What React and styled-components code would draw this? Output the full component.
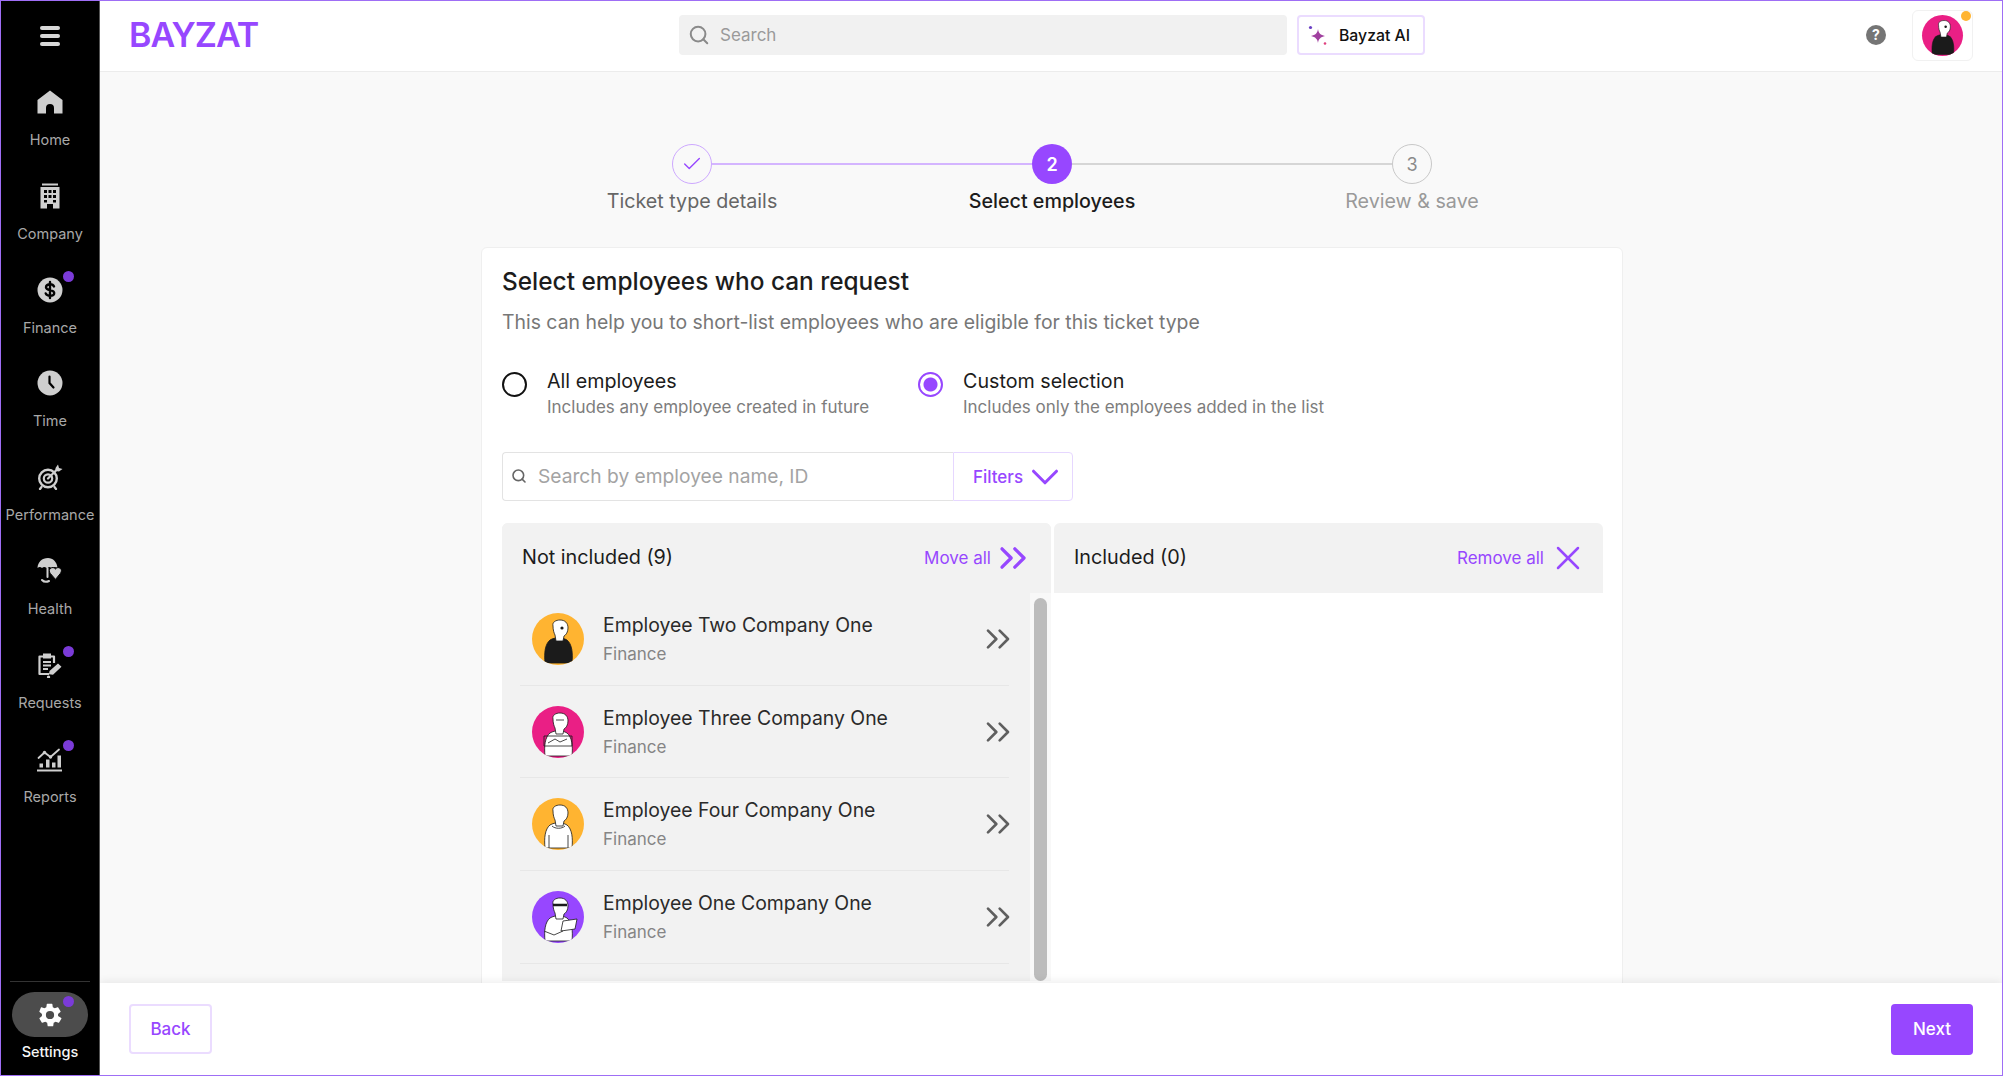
import React from 'react';
import styled, { createGlobalStyle } from 'styled-components';
import { Search, ChevronsRight, ChevronDown, X, Check } from 'lucide-react';

const GlobalStyle = createGlobalStyle`
  html, body {
    margin: 0;
    padding: 0;
    background: #fff;
    font-family: 'Inter', 'Liberation Sans', sans-serif;
    color: #1c1c1c;
  }
  * { box-sizing: border-box; }
`;

const NAV = [
  { label: 'Home', icon: 'home' },
  { label: 'Company', icon: 'company' },
  { label: 'Finance', icon: 'finance', dot: true },
  { label: 'Time', icon: 'time' },
  { label: 'Performance', icon: 'performance' },
  { label: 'Health', icon: 'health' },
  { label: 'Requests', icon: 'requests', dot: true },
  { label: 'Reports', icon: 'reports', dot: true },
];

const EMPLOYEES = [
  { name: 'Employee Two Company One', bg: '#ffb431', look: 'sweater' },
  { name: 'Employee Three Company One', bg: '#ea1f85', look: 'box' },
  { name: 'Employee Four Company One', bg: '#ffb431', look: 'tee' },
  { name: 'Employee One Company One', bg: '#9747ff', look: 'laptop' },
];

const NavIcon = ({ type }) => {
  const fill = '#cfcfcf';
  switch (type) {
    case 'home':
      return (
        <svg width="26" height="26" viewBox="0 0 26 26">
          <path fill={fill} d="M13 1.5 25.5 11v13.5H17V19a4 4 0 0 0-8 0v5.5H.5V11z" />
        </svg>
      );
    case 'company':
      return (
        <svg width="26" height="26" viewBox="0 0 26 26">
          <path fill={fill} d="M5 .5h16v2H5zM3.5 4h19v21.5H16V21h-6v4.5H3.5z" />
          <path fill="#000" d="M7 7h3v3H7zM11.5 7h3v3h-3zM16 7h3v3h-3zM7 12h3v3H7zM11.5 12h3v3h-3zM16 12h3v3h-3zM7 17h3v2.500H7zM16 17h3v2.500h-3z" />
        </svg>
      );
    case 'finance':
      return (
        <svg width="26" height="26" viewBox="0 0 26 26">
          <circle cx="13" cy="13" r="12.5" fill={fill} />
          <path fill="none" stroke="#000" strokeWidth="2.400" strokeLinecap="round" d="M17 9.500c-.6-1.500-2-2.200-4-2.200-2.300 0-4 1-4 2.900 0 4 8.200 1.800 8.200 5.700 0 1.800-1.800 2.900-4.200 2.900-2.200 0-3.700-.9-4.300-2.400M13 5v16" />
        </svg>
      );
    case 'time':
      return (
        <svg width="26" height="26" viewBox="0 0 26 26">
          <circle cx="13" cy="13" r="12.5" fill={fill} />
          <path fill="none" stroke="#000" strokeWidth="2.200" strokeLinecap="round" d="M12.500 6.500V13l4 4.500" />
        </svg>
      );
    case 'performance':
      return (
        <svg width="26" height="26" viewBox="0 0 26 26" fill="none" stroke={fill}>
          <circle cx="11" cy="14.500" r="8.800" strokeWidth="2.400" />
          <circle cx="11" cy="14.500" r="4.200" strokeWidth="2.200" />
          <path strokeWidth="2.200" strokeLinecap="round" d="M11 14.500 20 5.500M4.500 23 3 25M17.500 23 19 25" />
          <path fill={fill} stroke="none" d="M18.500 4 21 .5l1 3.500 3.500 1-3.500 2.500-3.500-.5z" />
        </svg>
      );
    case 'health':
      return (
        <svg width="26" height="26" viewBox="0 0 26 26">
          <path fill={fill} d="M11 0C5 0 .8 4 .5 10c1.500-1.200 3-1.200 4.500 0 1.500-1.200 3-1.200 4.500 0 1.800-1.300 3.400-1.300 5 0 1.500-1.200 4-1.300 6-.3C20 4 16 0 11 0z" />
          <path fill={fill} stroke="#000" strokeWidth="1" d="M18.500 11c1.500-1.700 3.200-1.800 4.600-.8 1.700 1.200 1.700 3.500.3 5.200l-4.900 6-5.200-6c-1.400-1.700-1.300-4 .4-5.200 1.500-1 3.300-.9 4.800.8z" />
          <path fill="none" stroke={fill} strokeWidth="2" strokeLinecap="round" d="M10.500 10v9M5 22c2 2.200 5 2 7 1" />
        </svg>
      );
    case 'requests':
      return (
        <svg width="26" height="26" viewBox="0 0 26 26" fill="none" stroke={fill}>
          <path strokeWidth="2.200" strokeLinejoin="round" d="M12 22H2.500V4.500H17V11" />
          <path fill={fill} stroke="none" d="M6 1.500h8v5H6z" />
          <path strokeWidth="2" d="M6 10h8M6 13.500h8M6 17h5" />
          <path fill={fill} stroke="none" d="M21 11.500l3.500 3.200-8.500 8-4-.5.500-3.200zM11.500 23.500a1.600 1.600 0 1 0 .1 0z" />
        </svg>
      );
    case 'reports':
      return (
        <svg width="26" height="26" viewBox="0 0 26 26" fill={fill}>
          <path d="M0 23.500h25V25.500H0z" />
          <path d="M2.500 17.500h3.500v4H2.500zM9 13.500h3.500v8H9zM15 16.500h3.500v5H15zM20.500 9.500H24v12h-3.500z" />
          <path fill="none" stroke={fill} strokeWidth="1.800" strokeLinecap="round" d="M1.500 12 7.500 6.500l6 4.500L22 3.500" />
          <circle cx="7.500" cy="6.500" r="1.700" />
          <circle cx="13.500" cy="11" r="1.700" />
        </svg>
      );
    default:
      return null;
  }
};

const Gear = () => (
  <svg width="26" height="26" viewBox="0 0 24 24">
    <path
      fill="#fff"
      fillRule="evenodd"
      d="M19.400 13a7.600 7.600 0 0 0 0-2l2.200-1.700a.6.600 0 0 0 .1-.7l-2.100-3.600a.5.5 0 0 0-.6-.2l-2.600 1a7.800 7.800 0 0 0-1.800-1l-.4-2.700a.5.5 0 0 0-.5-.5H9.500a.5.500 0 0 0-.5.500l-.4 2.700c-.6.300-1.200.6-1.800 1l-2.600-1a.5.500 0 0 0-.6.200L2.300 8.600a.5.500 0 0 0 .1.700L4.600 11a7.600 7.600 0 0 0 0 2l-2.200 1.700a.6.600 0 0 0-.1.700l2.100 3.600c.1.200.4.300.6.200l2.600-1c.6.400 1.200.8 1.800 1l.4 2.700c0 .3.200.5.500.5h4.200c.3 0 .5-.2.500-.5l.4-2.700c.6-.2 1.200-.6 1.800-1l2.600 1c.2.100.5 0 .6-.2l2.100-3.600a.6.600 0 0 0-.1-.7zM12 15.800a3.800 3.800 0 1 1 0-7.600 3.800 3.800 0 0 1 0 7.600z"
    />
  </svg>
);

const Person = ({ look }) => {
  const ink = '#1b1b1b';
  return (
    <svg width="100%" height="100%" viewBox="0 0 52 52">
      <path
        fill={look === 'sweater' ? ink : '#fff'}
        stroke={ink}
        strokeWidth="0.8"
        d="M13 50c-1-10 0-19 5-23 5-3 12-3 17 0 5 4 6 13 5 23z"
      />
      <path fill="#fff" stroke={ink} strokeWidth="0.8" d="M21 13c-1-4 3-6 7-6 5 0 8 3 8 8 0 4-2 7-4 8l-1 5h-7l-1-6c-1-2-2-5-2-9z" />
      {look === 'sweater' && <circle cx="30" cy="15" r="1.600" fill={ink} />}
      {look === 'box' && <path fill="none" stroke={ink} strokeWidth="0.8" d="M24 14h8M12 30h28v10H12zM16 37l7-4 5 3 7-3" />}
      {look === 'tee' && <path fill="none" stroke={ink} strokeWidth="0.8" d="M20 28c3 3 10 3 13 0M17 37v13M36 37v13" />}
      {look === 'laptop' && <path stroke={ink} strokeWidth="2.600" d="M21 14h14" />}
      {look === 'laptop' && <path fill="#fff" stroke={ink} strokeWidth="0.8" d="M31 30l14-2-2 10-14 2zM12 40l10 4 9-4" />}
    </svg>
  );
};

export default function App() {
  return (
    <>
      <GlobalStyle />
      <Frame>
        <Sidebar>
          <Burger>
            <span />
            <span />
            <span />
          </Burger>
          {NAV.map((item) => (
            <NavItem key={item.label}>
              <IconBox>
                <NavIcon type={item.icon} />
                {item.dot && <NavDot />}
              </IconBox>
              <NavLabel>{item.label}</NavLabel>
            </NavItem>
          ))}
          <SettingsBlock>
            <SettingsPill>
              <IconBox>
                <Gear />
                <NavDot />
              </IconBox>
            </SettingsPill>
            <NavLabel $active>Settings</NavLabel>
          </SettingsBlock>
        </Sidebar>

        <Main>
          <Topbar>
            <LogoSlot>
              <Logo>BAYZAT</Logo>
            </LogoSlot>
            <TopSearch>
              <Search size={22} color="#8a8a8a" strokeWidth={2.2} />
              <span>Search</span>
            </TopSearch>
            <AiButton>
              <svg width="22" height="22" viewBox="0 0 22 22">
                <path fill="#a0409f" d="M11 5c.6 4 2.500 6 7 7-4.500 1-6.400 3-7 7-.6-4-2.500-6-7-7 4.500-1 6.400-3 7-7z" />
                <circle cx="3.500" cy="3.500" r="1.600" fill="#6a3fc4" />
                <circle cx="18" cy="19.500" r="1.300" fill="#e0407f" />
              </svg>
              Bayzat AI
            </AiButton>
            <HelpIcon>?</HelpIcon>
            <ProfileCard>
              <ProfileAvatar>
                <Person look="sweater" />
              </ProfileAvatar>
              <ProfileDot />
            </ProfileCard>
          </Topbar>

          <Content>
            <StepTrack>
              <StepCircle $state="done">
                <Check size={22} strokeWidth={1.5} />
              </StepCircle>
              <StepLine $done />
              <StepCircle $state="current">2</StepCircle>
              <StepLine />
              <StepCircle>3</StepCircle>
            </StepTrack>
            <StepLabels>
              <StepLabel $state="done">Ticket type details</StepLabel>
              <StepLabel $state="current">Select employees</StepLabel>
              <StepLabel>Review &amp; save</StepLabel>
            </StepLabels>

            <Card>
              <Title>Select employees who can request</Title>
              <Description>This can help you to short-list employees who are eligible for this ticket type</Description>

              <RadioRow>
                <RadioOption $width="416px">
                  <Radio />
                  <div>
                    <RadioTitle>All employees</RadioTitle>
                    <RadioSub>Includes any employee created in future</RadioSub>
                  </div>
                </RadioOption>
                <RadioOption>
                  <Radio $checked />
                  <div>
                    <RadioTitle>Custom selection</RadioTitle>
                    <RadioSub>Includes only the employees added in the list</RadioSub>
                  </div>
                </RadioOption>
              </RadioRow>

              <SearchRow>
                <SearchField>
                  <Search size={16} color="#666" strokeWidth={2.4} />
                  <span>Search by employee name, ID</span>
                </SearchField>
                <FilterButton>
                  Filters
                  <ChevronDown size={46} strokeWidth={1.6} />
                </FilterButton>
              </SearchRow>

              <Lists>
                <ListColumn $tinted>
                  <ListHeader>
                    <ListTitle>Not included (9)</ListTitle>
                    <ListAction>
                      Move all
                      <ChevronsRight size={44} strokeWidth={1.8} />
                    </ListAction>
                  </ListHeader>
                  <ListBody>
                    <Rows>
                      {EMPLOYEES.map((e) => (
                        <Row key={e.name}>
                          <Avatar $bg={e.bg}>
                            <Person look={e.look} />
                          </Avatar>
                          <RowText>
                            <RowName>{e.name}</RowName>
                            <RowSub>Finance</RowSub>
                          </RowText>
                          <RowChevron>
                            <ChevronsRight size={40} color="#5f5f5f" strokeWidth={1.6} />
                          </RowChevron>
                        </Row>
                      ))}
                    </Rows>
                    <ScrollTrack>
                      <ScrollThumb />
                    </ScrollTrack>
                  </ListBody>
                </ListColumn>
                <ListColumn>
                  <ListHeader>
                    <ListTitle>Included (0)</ListTitle>
                    <ListAction $tight>
                      Remove all
                      <X size={40} strokeWidth={1.5} />
                    </ListAction>
                  </ListHeader>
                </ListColumn>
              </Lists>
            </Card>
          </Content>

          <Footer>
            <BackButton>Back</BackButton>
            <NextButton>Next</NextButton>
          </Footer>
        </Main>
      </Frame>
    </>
  );
}

const Frame = styled.div`
  width: 2003px;
  height: 1076px;
  border: 1.5px solid #9f6ef5;
  display: grid;
  grid-template-columns: 99px 1fr;
  overflow: hidden;
  background: #fff;
`;

const Sidebar = styled.aside`
  background: #000;
  border-right: 1px solid #555;
  display: flex;
  flex-direction: column;
  align-items: stretch;
`;

const Burger = styled.div`
  height: 70px;
  display: flex;
  flex-direction: column;
  align-items: center;
  justify-content: center;
  gap: 4px;

  span {
    width: 20px;
    height: 4px;
    border-radius: 2px;
    background: #d8d8d8;
  }
`;

const NavItem = styled.div`
  height: 93.8px;
  padding-top: 18px;
  display: flex;
  flex-direction: column;
  align-items: center;
`;

const IconBox = styled.div`
  position: relative;
  width: 26px;
  height: 26px;
  margin-bottom: 16px;
  flex: none;
`;

const NavDot = styled.i`
  position: absolute;
  top: -6px;
  right: -11px;
  width: 11px;
  height: 11px;
  border-radius: 50%;
  background: #7b3bd8;
`;

const NavLabel = styled.div`
  font-size: 14.5px;
  line-height: 18px;
  white-space: nowrap;
  color: ${(p) => (p.$active ? '#f5f5f5' : '#a8a8a8')};
  font-weight: ${(p) => (p.$active ? 500 : 400)};
`;

const SettingsBlock = styled.div`
  margin: auto 9px 0;
  padding: 10px 0 0;
  border-top: 1px solid #333;
  display: flex;
  flex-direction: column;
  align-items: center;
  height: 94px;
`;

const SettingsPill = styled.div`
  width: 76px;
  height: 45px;
  border-radius: 23px;
  background: #4c4c4c;
  display: flex;
  align-items: center;
  justify-content: center;
  margin-bottom: 6px;
  flex: none;

  ${IconBox} {
    margin-bottom: 0;
  }
`;

const Main = styled.main`
  min-width: 0;
  display: flex;
  flex-direction: column;
  height: 100%;
  overflow: hidden;
`;

const Topbar = styled.header`
  height: 71px;
  flex: none;
  display: flex;
  align-items: center;
  padding: 0 29px 2px 0;
  background: #fff;
  border-bottom: 1px solid #ececec;
`;

const LogoSlot = styled.div`
  width: 579px;
  padding-left: 29px;
  flex: none;
`;

const Logo = styled.div`
  font-size: 34px;
  line-height: 36px;
  font-weight: 600;
  color: #9747ff;
  letter-spacing: -1px;
`;

const TopSearch = styled.div`
  width: 608px;
  height: 40px;
  background: #f1f1f1;
  border-radius: 4px;
  display: flex;
  align-items: center;
  gap: 10px;
  padding-left: 9px;
  font-size: 17px;
  color: #9a9a9a;
`;

const AiButton = styled.button`
  width: 128px;
  height: 40px;
  margin-left: 10px;
  background: #fff;
  border: 2px solid #ebdcff;
  border-radius: 4px;
  display: flex;
  align-items: center;
  gap: 10px;
  padding: 0 0 0 8px;
  font-family: inherit;
  font-size: 15.8px;
  font-weight: 500;
  color: #111;
`;

const HelpIcon = styled.div`
  margin-left: auto;
  width: 20px;
  height: 20px;
  border-radius: 50%;
  background: #757575;
  color: #fff;
  font-size: 14px;
  font-weight: 700;
  line-height: 20px;
  text-align: center;
`;

const ProfileCard = styled.div`
  position: relative;
  width: 61px;
  height: 51px;
  margin-left: 26px;
  border: 1px solid #f1f1f1;
  border-radius: 6px;
  display: flex;
  align-items: center;
  justify-content: center;
`;

const ProfileAvatar = styled.div`
  width: 41px;
  height: 41px;
  border-radius: 50%;
  overflow: hidden;
  background: #ea1f85;
`;

const ProfileDot = styled.i`
  position: absolute;
  top: 0;
  right: 1px;
  width: 10px;
  height: 10px;
  border-radius: 50%;
  background: #ffb431;
`;

const Content = styled.section`
  flex: 1;
  min-height: 0;
  overflow: hidden;
  background: #f9f9f9;
  padding: 72px 0 0 2px;
  display: flex;
  flex-direction: column;
  align-items: center;
`;

const StepTrack = styled.div`
  width: 760px;
  display: flex;
  align-items: center;
  flex: none;
`;

const StepCircle = styled.div`
  width: 40px;
  height: 40px;
  border-radius: 50%;
  flex: none;
  display: flex;
  align-items: center;
  justify-content: center;
  font-size: 18px;
  font-weight: ${(p) => (p.$state === 'current' ? 600 : 400)};
  color: ${(p) => (p.$state === 'current' ? '#fff' : p.$state === 'done' ? '#9747ff' : '#8a8a8a')};
  background: ${(p) => (p.$state === 'current' ? '#9747ff' : 'transparent')};
  border: ${(p) => (p.$state === 'current' ? 'none' : p.$state === 'done' ? '1.5px solid #cda8ff' : '1.5px solid #c8c8c8')};
`;

const StepLine = styled.div`
  flex: 1;
  height: 2px;
  background: ${(p) => (p.$done ? '#d4b5ff' : '#d6d6d6')};
`;

const StepLabels = styled.div`
  display: grid;
  grid-template-columns: repeat(3, 360px);
  margin-top: 5px;
  flex: none;
`;

const StepLabel = styled.div`
  text-align: center;
  font-size: 19.7px;
  line-height: 24px;
  font-weight: ${(p) => (p.$state === 'current' ? 500 : 400)};
  color: ${(p) => (p.$state === 'current' ? '#1c1c1c' : p.$state === 'done' ? '#666' : '#9a9a9a')};
`;

const Card = styled.div`
  width: 1142px;
  margin-top: 34px;
  flex: none;
  height: 800px;
  background: #fff;
  border: 1px solid #efefef;
  border-radius: 6px;
  padding: 19px 20px 0;
`;

const Title = styled.h2`
  margin: 0;
  font-size: 24.4px;
  line-height: 28px;
  font-weight: 450;
  color: #1c1c1c;
`;

const Description = styled.p`
  margin: 15px 0 0;
  font-size: 19.4px;
  line-height: 24px;
  color: #777;
`;

const RadioRow = styled.div`
  display: flex;
  margin-top: 35px;
`;

const RadioOption = styled.label`
  display: flex;
  gap: 20px;
  width: ${(p) => p.$width || 'auto'};
`;

const Radio = styled.span`
  width: 25px;
  height: 25px;
  flex: none;
  margin-top: 3px;
  border-radius: 50%;
  border: 2px solid ${(p) => (p.$checked ? '#9747ff' : '#111')};
  background: ${(p) => (p.$checked ? 'radial-gradient(circle, #9747ff 0 6.5px, #fff 7.5px)' : '#fff')};
`;

const RadioTitle = styled.div`
  font-size: 19.7px;
  line-height: 24px;
  font-weight: 400;
  color: #1c1c1c;
`;

const RadioSub = styled.div`
  margin-top: 4px;
  font-size: 17px;
  line-height: 20px;
  color: #7d7d7d;
`;

const SearchRow = styled.div`
  display: flex;
  margin-top: 35px;
`;

const SearchField = styled.div`
  width: 451px;
  height: 49px;
  background: #fff;
  border: 1px solid #e3e3e3;
  border-right: none;
  border-radius: 4px 0 0 4px;
  display: flex;
  align-items: center;
  gap: 11px;
  padding: 0 0 2px 8px;
  font-size: 19.2px;
  color: #a3a3a3;
`;

const FilterButton = styled.button`
  width: 120px;
  height: 49px;
  background: #fff;
  border: 1.5px solid #e6d7ff;
  border-radius: 0 4px 4px 0;
  display: flex;
  align-items: center;
  justify-content: center;
  gap: 10px;
  padding: 0 0 0 4px;
  font-family: inherit;
  font-size: 17px;
  font-weight: 450;
  color: #9747ff;
  overflow: hidden;

  svg {
    margin: 0 -11px;
    flex: none;
  }
`;

const Lists = styled.div`
  display: grid;
  grid-template-columns: 549px 549px;
  gap: 3px;
  margin-top: 22px;
`;

const ListColumn = styled.div`
  background: ${(p) => (p.$tinted ? '#f2f2f2' : '#fff')};
  border-radius: 6px 6px 0 0;
`;

const ListHeader = styled.div`
  height: 70px;
  background: #f2f2f2;
  border-radius: 6px 6px 0 0;
  display: flex;
  align-items: center;
  justify-content: space-between;
  padding: 0 20px 3px 20px;
`;

const ListTitle = styled.div`
  font-size: 19.8px;
  font-weight: 400;
  color: #1c1c1c;
`;

const ListAction = styled.button`
  background: none;
  border: none;
  display: flex;
  align-items: center;
  gap: ${(p) => (p.$tight ? '4px' : '0')};
  padding: 2px 0 0;
  font-family: inherit;
  font-size: 17px;
  font-weight: 400;
  color: #9747ff;

  svg {
    margin-right: ${(p) => (p.$tight ? '-5px' : '-4px')};
  }
`;

const ListBody = styled.div`
  display: flex;
  align-items: stretch;
`;

const Rows = styled.div`
  flex: 1;
  padding: 0 21px 0 18px;
`;

const Row = styled.div`
  height: 92.7px;
  display: flex;
  align-items: center;
  padding-left: 12px;
  border-bottom: 1px solid #e7e7e7;
`;

const Avatar = styled.div`
  width: 52px;
  height: 52px;
  flex: none;
  border-radius: 50%;
  overflow: hidden;
  background: ${(p) => p.$bg};
`;

const RowText = styled.div`
  flex: 1;
  margin-left: 19px;
`;

const RowName = styled.div`
  font-size: 19.4px;
  line-height: 24px;
  color: #2a2a2a;
  margin-top: -1px;
`;

const RowSub = styled.div`
  margin-top: 7px;
  font-size: 17px;
  line-height: 20px;
  color: #858585;
`;

const RowChevron = styled.div`
  display: flex;
  margin-right: -9px;
`;

const ScrollTrack = styled.div`
  width: 21px;
  flex: none;
  background: #f8f8f8;
  padding: 5px 4px 0;
`;

const ScrollThumb = styled.div`
  width: 13px;
  height: 383px;
  border-radius: 7px;
  background: #bcbcbc;
`;

const Footer = styled.footer`
  position: relative;
  height: 92px;
  flex: none;
  display: flex;
  align-items: center;
  justify-content: space-between;
  padding: 0 29px;
  background: #fff;
  box-shadow: 0 -2px 8px rgba(0, 0, 0, 0.07);
`;

const BackButton = styled.button`
  width: 83px;
  height: 50px;
  background: #fff;
  border: 2px solid #ebdcff;
  border-radius: 4px;
  font-family: inherit;
  font-size: 17px;
  font-weight: 500;
  color: #9747ff;
`;

const NextButton = styled.button`
  width: 82px;
  height: 51px;
  background: #9747ff;
  border: none;
  border-radius: 4px;
  font-family: inherit;
  font-size: 17px;
  font-weight: 500;
  color: #fff;
`;
